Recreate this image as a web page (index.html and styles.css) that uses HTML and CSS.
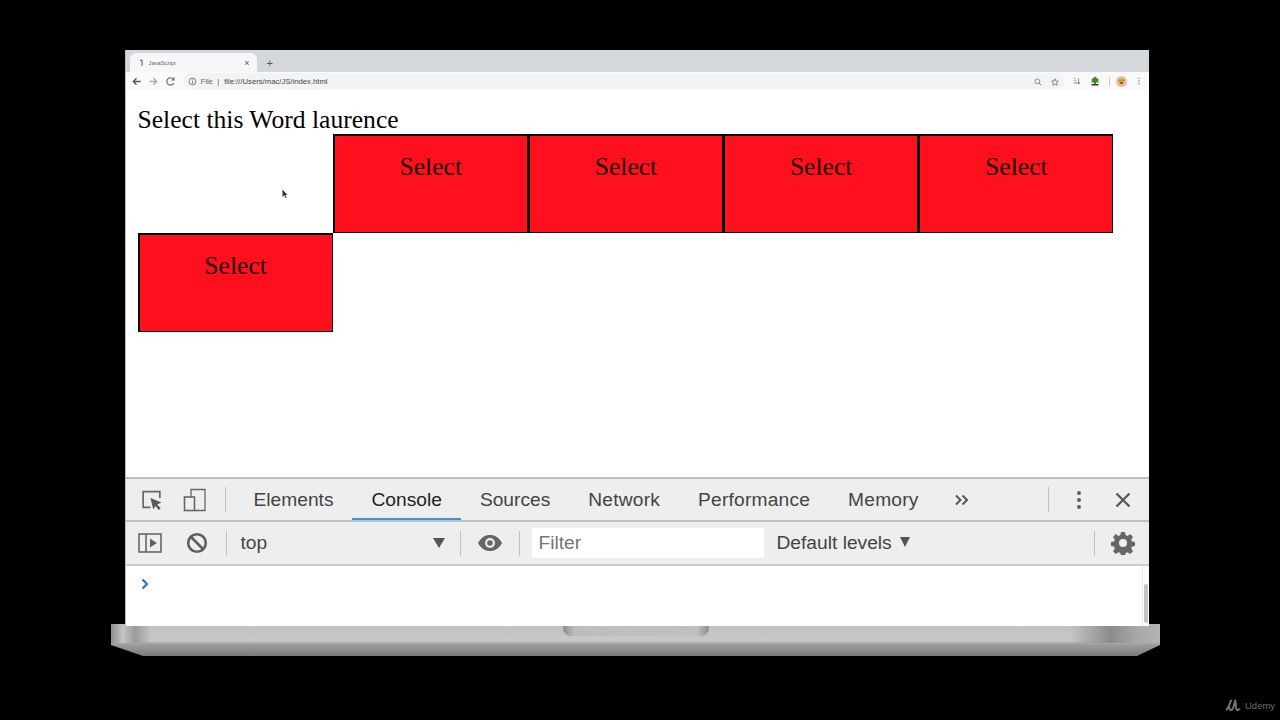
FILE: index.html
```html
<!DOCTYPE html>
<html lang="en">
<head>
<meta charset="utf-8">
<title>JavaScript</title>
<link rel="stylesheet" href="styles.css">
</head>
<body>
<div class="stage">
  <div class="screen">
    <div class="tabstrip">
      <div class="tab">
        <svg class="fav" viewBox="0 0 6 8"><path d="M1 1.500 3 1v6" fill="none" stroke="#555" stroke-width="1"/></svg>
        <span class="tab-title">JavaScript</span>
        <span class="tab-x">×</span>
      </div>
      <span class="tab-plus">+</span>
    </div>
    <div class="toolbar">
      <svg class="nav" viewBox="0 0 12 12"><path d="M10.500 6H2.500M6 2.500 2.500 6 6 9.500" fill="none" stroke="#555" stroke-width="1.400"/></svg>
      <svg class="nav" viewBox="0 0 12 12"><path d="M1.500 6H9.500M6 2.500 9.500 6 6 9.500" fill="none" stroke="#aaa" stroke-width="1.400"/></svg>
      <svg class="nav" viewBox="0 0 12 12"><path d="M9.600 7.600A4 4 0 1 1 9 3.400M9.800 1.400v3h-3" fill="none" stroke="#666" stroke-width="1.200"/></svg>
      <div class="omnibox">
        <svg class="info" viewBox="0 0 10 10"><circle cx="5" cy="5" r="3.800" fill="none" stroke="#666" stroke-width=".9"/><path d="M5 4.400v3M5 2.600v1" stroke="#666" stroke-width=".9"/></svg>
        <span class="scheme">File&nbsp; |</span>
        <span class="url">file:///Users/mac/JS/index.html</span>
        <span class="spacer"></span>
        <svg class="omni-icon" viewBox="0 0 10 10"><circle cx="4.200" cy="4.200" r="3" fill="none" stroke="#777" stroke-width="1"/><path d="M6.400 6.400 9 9" stroke="#777" stroke-width="1.200"/></svg>
        <svg class="omni-icon star" viewBox="0 0 10 10"><path d="M5 1 6.200 3.800 9.200 4.100 7 6.100 7.600 9 5 7.500 2.400 9 3 6.100.8 4.100 3.800 3.800Z" fill="none" stroke="#666" stroke-width=".9"/></svg>
      </div>
      <div class="extensions">
        <svg class="ext" viewBox="0 0 10 10"><path d="M1 2h1M3 2h1M1 4.500h1M3 4.500h1M1 7.500h8M7 2v7" stroke="#666" stroke-width="1"/></svg>
        <svg class="ext tree" viewBox="0 0 10 10"><path d="M5 .5 9 4 7.500 5 9.500 6.500H.5L2.500 5 1 4Z" fill="#3f8a1f"/><path d="M4.300 6h1.400v2h-1.400z" fill="#5b3a1a"/><path d="M1.500 8h7v1.500h-7z" fill="#333"/></svg>
        <span class="toolbar-sep"></span>
        <svg class="avatar" viewBox="0 0 10 10"><circle cx="5" cy="5" r="5" fill="#dcc6b4"/><circle cx="5" cy="5" r="3.200" fill="#e8b04c"/><path d="M3 3.800h1.200M5.800 3.800H7" stroke="#4a2a10" stroke-width=".8"/><path d="M3.800 5.600h2.400v1.200H3.800z" fill="#5a2414"/></svg>
        <svg class="ext menu" viewBox="0 0 4 10"><circle cx="2" cy="1.600" r=".8" fill="#555"/><circle cx="2" cy="5" r=".8" fill="#555"/><circle cx="2" cy="8.400" r=".8" fill="#555"/></svg>
      </div>
    </div>
    <main class="page">
      <div class="heading">Select this Word laurence</div>
      <div class="grid">
        <div class="cell-empty">
          <svg class="cursor" viewBox="0 0 6 10"><path d="M.5.5v7.500l1.800-1.700 1.200 2.700 1-.5-1.200-2.500h2.200Z" fill="#333"/></svg>
        </div>
        <div class="box">Select</div>
        <div class="box">Select</div>
        <div class="box">Select</div>
        <div class="box">Select</div>
        <div class="box">Select</div>
      </div>
    </main>
    <section class="devtools">
      <div class="dt-tabs">
        <svg class="dt-icon inspect" viewBox="0 0 22 22"><path d="M10 18H3V3h16v6" fill="none" stroke="#666" stroke-width="1.600"/><path d="M10 9 20.500 13.500 16.500 15.200 19.800 19 18 20.600 14.800 16.800 12.700 20Z" fill="#5a5a5a"/></svg>
        <svg class="dt-icon device" viewBox="0 0 24 24"><path d="M8 9V1.500h14v21H12" fill="none" stroke="#666" stroke-width="1.300"/><rect x="1.500" y="9" width="10" height="13.500" fill="none" stroke="#666" stroke-width="1.600"/></svg>
        <span class="dt-sep"></span>
        <span class="dt-tab">Elements</span>
        <span class="dt-tab active">Console</span>
        <span class="dt-tab">Sources</span>
        <span class="dt-tab wide">Network</span>
        <span class="dt-tab wide">Performance</span>
        <span class="dt-tab wide">Memory</span>
        <svg class="more" viewBox="0 0 16 12"><path d="M2 1.500 6.500 6 2 10.500M8.500 1.500 13 6 8.500 10.500" fill="none" stroke="#555" stroke-width="2"/></svg>
        <span class="spacer"></span>
        <span class="dt-sep end"></span>
        <svg class="kebab" viewBox="0 0 6 20"><circle cx="3" cy="3" r="2" fill="#5f5f5f"/><circle cx="3" cy="10" r="2" fill="#5f5f5f"/><circle cx="3" cy="17" r="2" fill="#5f5f5f"/></svg>
        <svg class="close" viewBox="0 0 16 16"><path d="M1.500 1.500 14.500 14.500M14.500 1.500 1.500 14.500" stroke="#5a5a5a" stroke-width="2.400"/></svg>
      </div>
      <div class="dt-bar">
        <svg class="bar-icon sidebar" viewBox="0 0 24 20"><rect x="1" y="1" width="22" height="18" fill="none" stroke="#666" stroke-width="1.600"/><path d="M8 1v18" stroke="#666" stroke-width="1.600"/><path d="M12 5.500 19 10 12 14.500Z" fill="#5f5f5f"/></svg>
        <svg class="bar-icon block" viewBox="0 0 22 22"><circle cx="11" cy="11" r="8.800" fill="none" stroke="#5f5f5f" stroke-width="2.600"/><path d="M5 5 17 17" stroke="#5f5f5f" stroke-width="2.600"/></svg>
        <span class="dt-sep short"></span>
        <div class="context">
          <span>top</span>
          <span class="caret"></span>
        </div>
        <span class="dt-sep short flush"></span>
        <svg class="eye" viewBox="0 0 26 18"><path d="M1 9C4 3.500 8 1 13 1s9 2.500 12 8c-3 5.500-7 8-12 8S4 14.500 1 9Z" fill="#666"/><circle cx="13" cy="9" r="5" fill="#eee"/><circle cx="13" cy="9" r="2.800" fill="#666"/></svg>
        <span class="dt-sep short tight"></span>
        <div class="filter">Filter</div>
        <div class="levels">Default levels<span class="caret small"></span></div>
        <span class="spacer"></span>
        <span class="dt-sep short"></span>
        <svg class="gear" viewBox="0 0 24 24"><path fill="#666" fill-rule="evenodd" d="M10 1h4l.6 3.100 2 .8 2.600-1.800 2.800 2.800-1.800 2.600.8 2 3 .5v4l-3 .6-.8 2 1.800 2.600-2.800 2.800-2.600-1.800-2 .8-.6 3h-4l-.6-3-2-.8-2.600 1.800-2.800-2.800 1.800-2.600-.8-2-3-.6v-4l3-.5.8-2L2 5.900l2.800-2.800 2.600 1.800 2-.8ZM12 8a4 4 0 1 0 0 8 4 4 0 0 0 0-8Z"/></svg>
      </div>
      <div class="dt-console">
        <svg class="prompt" viewBox="0 0 8 12"><path d="M1.500 1.500 6 6 1.500 10.500" fill="none" stroke="#2f6fd8" stroke-width="2.200"/></svg>
        <div class="scrolltrack"><div class="scrollthumb"></div></div>
      </div>
    </section>
  </div>
  <div class="base">
    <div class="notch"></div>
  </div>
  <div class="brand">
    <svg class="brand-mark" viewBox="0 0 18 16"><path d="M2 14C4 11 6 7 7.500 2M5.500 10C5 15 8.500 15 10 10.500L12.500 2M13 5c-1 10 2 10 4.500 7" fill="none" stroke="#777" stroke-width="2.200"/></svg>
    <span>Udemy</span>
  </div>
</div>
</body>
</html>
```
FILE: styles.css
```css
* { box-sizing: border-box; }
html, body { margin: 0; padding: 0; background: #000; }
body { width: 1280px; height: 720px; overflow: hidden; }
.stage { position: relative; width: 1280px; height: 720px; padding-top: 50px; display: flex; flex-direction: column; align-items: center; }
.screen { width: 1024px; height: 576px; margin-left: -7px; background: #fff; display: flex; flex-direction: column; font-family: "Liberation Sans", Arial, sans-serif; border-left: 1px solid #bbb; }
.spacer { flex: 1; }

.tabstrip { height: 22px; flex: none; background: #d4d8dc; display: flex; align-items: flex-end; padding-left: 4px; }
.tab { width: 127px; height: 19px; background: #f6f7f8; border-radius: 6px 6px 0 0; display: flex; align-items: center; padding: 0 0 0 9px; }
.fav { width: 6px; height: 8px; }
.tab-title { font-size: 5.800px; color: #666; margin-left: 4px; flex: 1; }
.tab-x { font-size: 9px; color: #555; margin-right: 7px; }
.tab-plus { font-size: 11px; color: #555; margin: 0 0 1px 10px; line-height: 16px; }

.toolbar { height: 18px; flex: none; background: #fafafa; display: flex; align-items: center; padding-left: 5px; padding-right: 8px; }
.nav { width: 11px; height: 11px; margin-right: 6px; flex: none; }
.omnibox { width: 884px; height: 16px; margin-left: 1px; background: #f1f3f4; border-radius: 8px; display: flex; align-items: center; padding: 1px 6px 0 5px; font-size: 7.700px; color: #555; }
.info { width: 9px; height: 9px; margin-right: 4px; }
.scheme { color: #666; margin-right: 5px; }
.url { color: #444; }
.omni-icon { width: 8px; height: 8px; margin-left: 9px; }
.extensions { flex: 1; display: flex; align-items: center; padding-left: 8px; }
.ext { width: 8px; height: 8px; margin-right: 10px; flex: none; }
.tree { width: 10px; height: 10px; margin-left: -1px; margin-right: 9px; }
.toolbar-sep { width: 1px; height: 9px; background: #ccc; margin-right: 6px; }
.avatar { width: 11px; height: 11px; margin-right: 10px; flex: none; }
.menu { width: 4px; margin-right: 0; }

.page { height: 387px; flex: none; background: #fff; padding: 16px 0 0 12px; font-family: "Liberation Serif", "Times New Roman", serif; color: #000; }
.heading { font-size: 25.600px; line-height: 28px; height: 28px; }
.grid { display: grid; grid-template-columns: repeat(5, 195.200px); grid-auto-rows: 99.200px; }
.cell-empty { position: relative; }
.cursor { position: absolute; left: 144px; top: 55px; width: 6px; height: 10px; }
.box { background: #ff101c; border-style: solid; border-color: #000; border-width: 2px 1px 1px 2px; text-align: center; font-size: 25.600px; line-height: 28px; padding-top: 17px; color: #1a0004; }

.devtools { flex: 1; display: flex; flex-direction: column; border-top: 2px solid #bdbdbd; }
.dt-tabs { height: 43px; flex: none; background: #eee; border-bottom: 2px solid #c0c0c0; display: flex; align-items: center; padding-left: 14px; color: #444; font-size: 19.200px; }
.dt-icon { width: 23px; height: 24px; flex: none; }
.device { margin-left: 20px; width: 24px; }
.dt-sep { width: 1px; height: 25px; background: #c2c2c2; flex: none; margin-left: 18px; }
.dt-sep.end { margin-left: 0; }
.dt-tab { height: 41px; line-height: 41px; padding: 0 19px; flex: none; }
.dt-tab.wide { letter-spacing: .2px; }
.dt-sep + .dt-tab { margin-left: 9px; }
.dt-tab.active { color: #222; border-bottom: 2px solid #3a96dc; }
.more { width: 16px; height: 12px; margin-left: 16px; flex: none; }
.kebab { width: 6px; height: 20px; margin-left: 27px; flex: none; }
.close { width: 16px; height: 16px; margin: 0 18px 0 33px; flex: none; }

.dt-bar { height: 44px; flex: none; background: #eee; border-bottom: 2px solid #ccc; display: flex; align-items: center; padding-left: 12px; color: #444; font-size: 19.200px; }
.bar-icon { flex: none; }
.sidebar { width: 24px; height: 20px; }
.block { width: 22px; height: 22px; margin-left: 24px; }
.dt-sep.short { margin-left: 18px; }
.dt-sep.short.flush { margin-left: 0; }
.dt-sep.short.tight { margin-left: 16px; }
.context { width: 233px; padding: 0 15px 0 14px; display: flex; justify-content: space-between; align-items: center; }
.caret { width: 0; height: 0; border-left: 6px solid transparent; border-right: 6px solid transparent; border-top: 10px solid #555; }
.caret.small { display: inline-block; border-left-width: 5.500px; border-right-width: 5.500px; margin-left: 8px; vertical-align: 2px; }
.eye { width: 26px; height: 18px; margin-left: 16px; flex: none; }
.filter { width: 232px; height: 30px; line-height: 30px; margin-left: 12px; background: #fff; color: #757575; padding-left: 7px; }
.levels { margin-left: 13px; }
.gear { width: 24px; height: 24px; margin: 0 14px 0 16px; flex: none; }

.dt-console { flex: 1; background: #fff; position: relative; padding: 12px 0 0 15px; }
.prompt { display: block; width: 8px; height: 12px; }
.scrolltrack { position: absolute; right: 0; top: 0; bottom: 0; width: 7px; background: #fbfbfb; border-left: 1px solid #eaeaea; }
.scrollthumb { position: absolute; top: 18px; bottom: 3px; left: 1px; width: 4px; border-radius: 2px; background: #c4c4c4; }

.base { position: relative; width: 1049px; height: 30px; flex: none; margin-left: -9px; clip-path: polygon(0 -2px, 14px -2px, 14px 0, 1038px 0, 1038px -2px, 100% -2px, 100% 19px, 1026px 100%, 32px 100%, 0 19px); background: linear-gradient(#c2c2c2 0, #c8c8c8 50%, #a0a0a0 60%, #7a7a7a 100%); }
.base::before { content: ""; position: absolute; left: 0; top: -2px; height: 19px; width: 40px; background: linear-gradient(90deg, #8e8e8e, #c4c4c4 30%, #9a9a9a 60%, transparent); }
.base::after { content: ""; position: absolute; right: 0; top: -2px; height: 19px; width: 90px; background: linear-gradient(270deg, #b4b4b4, #a8a8a8 25%, #8c8c8c 55%, transparent); }
.notch { position: absolute; left: 452px; top: 0; width: 146px; height: 10px; border-radius: 0 0 8px 8px; background: linear-gradient(90deg, #8c8c8c, #bdbdbd 8%, #c0c0c0 92%, #8c8c8c); }

.brand { position: absolute; left: 1224px; top: 698px; display: flex; align-items: center; gap: 4px; color: #6e6e6e; font: 9.500px "Liberation Sans", Arial, sans-serif; }
.brand-mark { width: 17px; height: 14px; }
```
